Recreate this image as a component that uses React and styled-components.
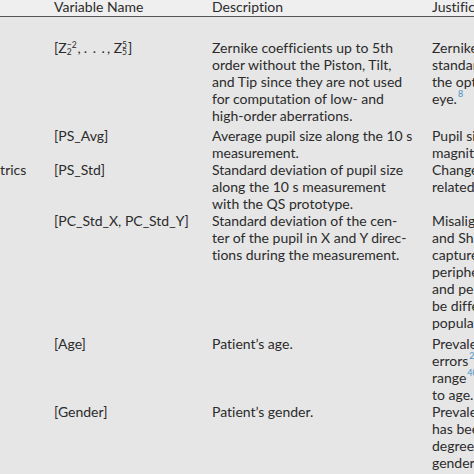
import React from 'react';
import styled, { createGlobalStyle } from 'styled-components';

const GlobalStyle = createGlobalStyle`
  html, body {
    margin: 0;
    padding: 0;
    background: #e6e6e6;
    overflow: hidden;
  }
  body {
    font-family: Lato, "Open Sans", sans-serif;
    font-variant-ligatures: none;
    color: #2b2b2b;
  }
`;

const rows = [
  {
    group: '',
    variable: 'zernike',
    description: [
      'Zernike coefficients up to 5th',
      'order without the Piston, Tilt,',
      'and Tip since they are not used',
      'for computation of low- and',
      'high-order aberrations.',
    ],
    justification: [
      'Zernike coefficients are the',
      'standard way to describe',
      'the optical aberrations of the',
      ['eye.', '8'],
    ],
    top: 22,
    bottom: 3,
  },
  {
    group: '',
    variable: '[PS_Avg]',
    description: ['Average pupil size along the 10\u00a0s', 'measurement.'],
    justification: ['Pupil size affects the', 'magnitude of the aberrations.'],
  },
  {
    group: 'Metrics',
    variable: '[PS_Std]',
    description: [
      'Standard deviation of pupil size',
      'along the 10\u00a0s measurement',
      'with the QS prototype.',
    ],
    justification: ['Changes in pupil size are', 'related to accommodation.'],
  },
  {
    group: '',
    variable: '[PC_Std_X, PC_Std_Y]',
    description: [
      'Standard deviation of the cen-',
      'ter of the pupil in X and Y direc-',
      'tions during the measurement.',
    ],
    justification: [
      'Misalignment between the pupil',
      'and Shack-Hartmann sensor can',
      'capture aberrations from',
      'peripheral zones of the pupil',
      'and performance could',
      'be different across the',
      'population.',
    ],
    bottom: 4,
  },
  {
    group: '',
    variable: '[Age]',
    description: ['Patient\u2019s age.'],
    justification: [
      'Prevalence of refractive',
      ['errors', '2,39', ' differs across the age'],
      ['range', '40', ' and aberrations change'],
      'to age.',
    ],
  },
  {
    group: '',
    variable: '[Gender]',
    description: ['Patient\u2019s gender.'],
    justification: [
      'Prevalence of refractive errors',
      'has been shown to vary in',
      'degree according to the',
      'gender.',
    ],
  },
];

const Table = styled.div`
  display: grid;
  grid-template-columns: 74px 158px 220px 260px;
  margin-left: -20px;
  width: 712px;
`;

const HeadCell = styled.div`
  font-size: 14px;
  line-height: 13px;
  height: 16px;
  margin-top: -2px;
  padding-top: 2px;
  background: #efefef;
  border-bottom: 1.5px solid #555;
  white-space: nowrap;
  overflow: hidden;
`;

const Cell = styled.div`
  font-size: 14px;
  line-height: 17px;
  padding-top: ${(p) => p.$top || 0}px;
  padding-bottom: ${(p) => p.$bottom || 0}px;
  white-space: nowrap;
  overflow: hidden;
`;

const Line = styled.div`
  height: 17px;
`;

const Ref = styled.sup`
  color: #4a93c4;
  font-size: 9px;
  line-height: 0;
  vertical-align: 7px;
  margin-left: 1px;
`;

const Zed = styled.span`
  display: inline-flex;
  align-items: center;
`;

const Scripts = styled.span`
  display: inline-flex;
  flex-direction: column;
  font-size: 8.5px;
  line-height: 7px;
  margin: 0 1px 0 0;
  transform: translateY(1px);
`;

const Dots = styled.span`
  letter-spacing: 1px;
  margin: 0 1px 0 3px;
`;

const ZernikeVar = () => (
  <Zed>
    [Z
    <Scripts>
      <span>&minus;2</span>
      <span>2</span>
    </Scripts>
    ,<Dots>. . .</Dots>, Z
    <Scripts>
      <span>5</span>
      <span>5</span>
    </Scripts>
    ]
  </Zed>
);

const renderLine = (line, i) => {
  if (typeof line === 'string') return <Line key={i}>{line}</Line>;
  const [before, ref, after] = line;
  return (
    <Line key={i}>
      {before}
      <Ref>{ref}</Ref>
      {after}
    </Line>
  );
};

const App = () => (
  <>
    <GlobalStyle />
    <Table>
      <HeadCell />
      <HeadCell>Variable Name</HeadCell>
      <HeadCell>Description</HeadCell>
      <HeadCell>Justification</HeadCell>
      {rows.map((row, r) => (
        <React.Fragment key={r}>
          <Cell $top={row.top} $bottom={row.bottom}>
            <Line>{row.group}</Line>
          </Cell>
          <Cell $top={row.top} $bottom={row.bottom}>
            <Line>{row.variable === 'zernike' ? <ZernikeVar /> : row.variable}</Line>
          </Cell>
          <Cell $top={row.top} $bottom={row.bottom}>
            {row.description.map(renderLine)}
          </Cell>
          <Cell $top={row.top} $bottom={row.bottom}>
            {row.justification.map(renderLine)}
          </Cell>
        </React.Fragment>
      ))}
    </Table>
  </>
);

export default App;
